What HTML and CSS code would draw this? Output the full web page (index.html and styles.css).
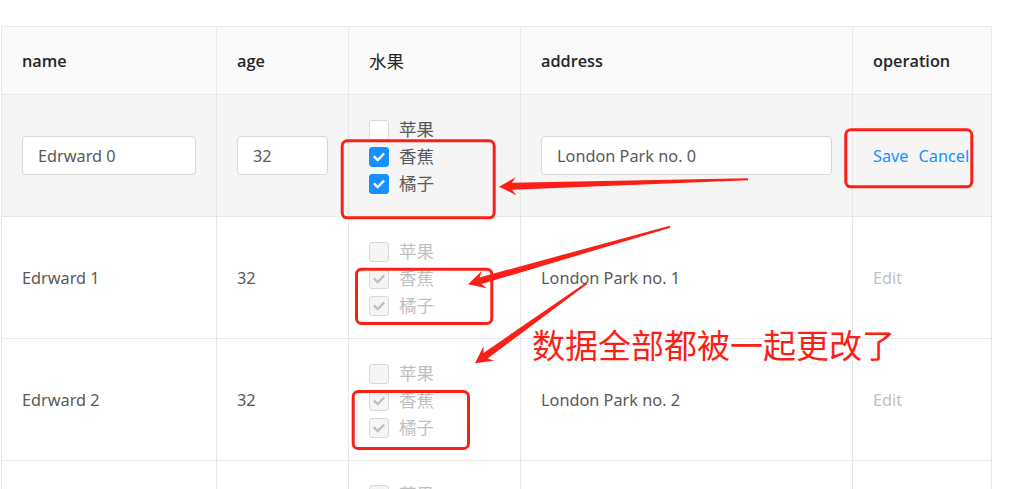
FILE: index.html
```html
<!DOCTYPE html>
<html lang="zh-CN">
<head>
<meta charset="utf-8">
<title>Editable table</title>
<link rel="stylesheet" href="styles.css">
</head>
<body>
<div class="page">
  <div class="table">
    <div class="row head">
      <div class="cell">name</div>
      <div class="cell">age</div>
      <div class="cell zh">水果</div>
      <div class="cell">address</div>
      <div class="cell">operation</div>
    </div>

    <div class="row editing">
      <div class="cell"><input class="field" value="Edrward 0"></div>
      <div class="cell"><input class="field" value="32"></div>
      <div class="cell">
        <div class="checks">
          <label class="check"><span class="box"></span><span class="lbl">苹果</span></label>
          <label class="check on"><span class="box"><svg viewBox="0 0 20 20"><path d="M5.2 10.2 L8.6 13.4 L14.8 7"/></svg></span><span class="lbl">香蕉</span></label>
          <label class="check on"><span class="box"><svg viewBox="0 0 20 20"><path d="M5.2 10.2 L8.6 13.4 L14.8 7"/></svg></span><span class="lbl">橘子</span></label>
        </div>
      </div>
      <div class="cell"><input class="field" value="London Park no. 0"></div>
      <div class="cell ops"><a class="link">Save</a><a class="link">Cancel</a></div>
    </div>

    <div class="row">
      <div class="cell">Edrward 1</div>
      <div class="cell">32</div>
      <div class="cell">
        <div class="checks off">
          <label class="check"><span class="box"></span><span class="lbl">苹果</span></label>
          <label class="check on"><span class="box"><svg viewBox="0 0 20 20"><path d="M5.2 10.2 L8.6 13.4 L14.8 7"/></svg></span><span class="lbl">香蕉</span></label>
          <label class="check on"><span class="box"><svg viewBox="0 0 20 20"><path d="M5.2 10.2 L8.6 13.4 L14.8 7"/></svg></span><span class="lbl">橘子</span></label>
        </div>
      </div>
      <div class="cell">London Park no. 1</div>
      <div class="cell"><span class="muted">Edit</span></div>
    </div>

    <div class="row">
      <div class="cell">Edrward 2</div>
      <div class="cell">32</div>
      <div class="cell">
        <div class="checks off">
          <label class="check"><span class="box"></span><span class="lbl">苹果</span></label>
          <label class="check on"><span class="box"><svg viewBox="0 0 20 20"><path d="M5.2 10.2 L8.6 13.4 L14.8 7"/></svg></span><span class="lbl">香蕉</span></label>
          <label class="check on"><span class="box"><svg viewBox="0 0 20 20"><path d="M5.2 10.2 L8.6 13.4 L14.8 7"/></svg></span><span class="lbl">橘子</span></label>
        </div>
      </div>
      <div class="cell">London Park no. 2</div>
      <div class="cell"><span class="muted">Edit</span></div>
    </div>

    <div class="row tail">
      <div class="cell"></div>
      <div class="cell"></div>
      <div class="cell top">
        <div class="checks off">
          <label class="check"><span class="box"></span><span class="lbl">苹果</span></label>
        </div>
      </div>
      <div class="cell"></div>
      <div class="cell"></div>
    </div>
  </div>

  <svg class="marks" width="1016" height="489" viewBox="0 0 1016 489">
    <g class="frames">
      <rect x="342.2" y="140.8" width="152" height="77" rx="5"/>
      <rect x="845.8" y="129.8" width="126" height="57" rx="5"/>
      <rect x="356.5" y="269.2" width="135.3" height="54.3" rx="5"/>
      <rect x="353.2" y="391.5" width="115.3" height="57" rx="5"/>
    </g>
    <g class="arrows">
      <polygon points="748,178.3 511.9,182.8 515.7,177.2 499,186.7 516.3,195.2 512.1,189.8 748,180.3"/>
      <polygon points="669.7,225.7 479.5,277.4 481.9,271.0 468,284.3 486.8,288.3 481.5,284.1 670.3,227.7"/>
      <polygon points="586.1,282.5 483.5,352.9 483.6,346.1 475,363.3 494.0,360.7 487.6,358.6 587.3,284.1"/>
    </g>
  </svg>
  <div class="note">数据全部都被一起更改了</div>
</div>
</body>
</html>
```

FILE: styles.css
```css
html, body {
  margin: 0;
  padding: 0;
  background: #ffffff;
  overflow: hidden;
}

.page {
  position: relative;
  width: 1016px;
  height: 489px;
  overflow: hidden;
  padding: 26px 0 0 1px;
  box-sizing: border-box;
  font-family: "Noto Sans", "Noto Sans CJK SC", sans-serif;
  font-size: 16.3px;
  color: #595959;
}

.table {
  width: 991px;
  box-sizing: border-box;
  border-left: 1px solid #e8e8e8;
  border-top: 1px solid #e8e8e8;
}

.row {
  display: grid;
  grid-template-columns: 215px 132px 172px 332px 139px;
  height: 122px;
}

.row.tail {
  height: 29px;
}

.row.head {
  height: 68px;
  background: #fafafa;
  color: #262626;
  font-family: "Open Sans", "Noto Sans", sans-serif;
  font-weight: 600;
}

.row.editing {
  background: #f5f5f5;
}

.cell {
  box-sizing: border-box;
  border-right: 1px solid #e8e8e8;
  border-bottom: 1px solid #e8e8e8;
  padding: 0 20px;
  display: flex;
  align-items: center;
  min-width: 0;
  white-space: nowrap;
}

.row.tail .cell {
  border-bottom: none;
}

.cell.top {
  align-items: flex-start;
  padding-top: 19px;
}

.zh {
  font-family: "Noto Sans CJK SC", sans-serif;
  font-size: 17.5px;
  font-weight: 400;
}

.field {
  width: 100%;
  height: 39px;
  box-sizing: border-box;
  border: 1px solid #d9d9d9;
  border-radius: 4px;
  background: #ffffff;
  padding: 0 15px;
  font-family: "Noto Sans", "Noto Sans CJK SC", sans-serif;
  font-size: 16.3px;
  color: #595959;
  outline: none;
}

.checks {
  display: flex;
  flex-direction: column;
}

.check {
  display: flex;
  align-items: center;
  height: 27px;
}

.box {
  width: 20px;
  height: 20px;
  box-sizing: border-box;
  border: 1px solid #d9d9d9;
  border-radius: 3px;
  background: #ffffff;
  margin-top: 3px;
  display: flex;
}

.box svg {
  width: 18px;
  height: 18px;
}

.box path {
  fill: none;
  stroke: #ffffff;
  stroke-width: 2.6;
  stroke-linecap: square;
  stroke-linejoin: miter;
}

.check.on .box {
  background: #1890ff;
  border-color: #1890ff;
}

.lbl {
  margin-left: 10px;
  font-family: "Noto Sans CJK SC", sans-serif;
  font-size: 17.5px;
  color: #595959;
}

.checks.off .box,
.checks.off .check.on .box {
  background: #f5f5f5;
  border-color: #d9d9d9;
}

.checks.off .box path {
  stroke: #bfbfbf;
}

.checks.off .lbl {
  color: #bfbfbf;
}

.ops {
  gap: 10px;
}

.link {
  color: #1890ff;
  cursor: pointer;
}

.muted {
  color: #bfbfbf;
}

.marks {
  position: absolute;
  left: 0;
  top: 0;
  pointer-events: none;
}

.frames rect {
  fill: none;
  stroke: #fc1f17;
  stroke-width: 3;
}

.arrows polygon {
  fill: #fc1f17;
  stroke: none;
}

.note {
  position: absolute;
  left: 532px;
  top: 328px;
  font-family: "Noto Sans CJK SC", sans-serif;
  font-size: 33px;
  line-height: 1;
  color: #fc1f17;
  white-space: nowrap;
}
```
